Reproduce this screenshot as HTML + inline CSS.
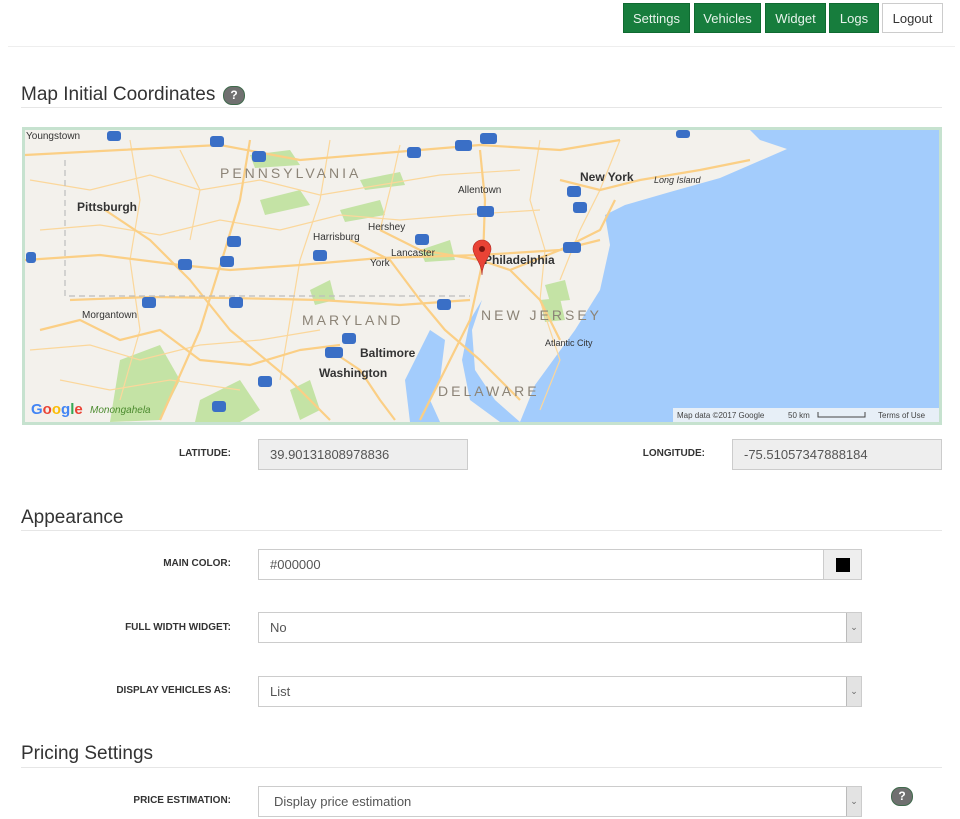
<!DOCTYPE html>
<html><head><meta charset="utf-8"><style>
*{box-sizing:border-box;margin:0;padding:0}
body{width:960px;height:819px;background:#fff;font-family:"Liberation Sans",sans-serif;color:#333;position:relative;overflow:hidden}
.a{position:absolute}
.btn{position:absolute;top:3px;height:30px;background:#177d3d;color:#e8f3ec;font-size:13px;line-height:30px;text-align:center;border:1px solid #0f6a31}
.h{position:absolute;left:21px;font-size:19px;color:#333}
.hr{position:absolute;left:21px;width:921px;height:1px;background:#e6e6e6}
.lbl{position:absolute;font-size:10px;font-weight:bold;color:#333;text-align:right;width:200px}
.inp{position:absolute;height:31px;border:1px solid #ccc;font-size:13px;color:#555;padding-left:11px;line-height:29px;background:#fff}
.sel .ar{position:absolute;right:0;top:0;width:15px;height:29px;background:#e3e3e3;border-left:1px solid #bbb;font-size:9px;color:#666;text-align:center;line-height:29px}
.q{position:absolute;width:22px;height:19px;border-radius:9px;background:#707070;border:1px solid #3f6a4c;color:#fff;font-weight:bold;font-size:12px;text-align:center;line-height:17px}
svg text{font-family:"Liberation Sans",sans-serif}
</style></head><body>
<div class="btn" style="left:623px;width:67px">Settings</div>
<div class="btn" style="left:694px;width:67px">Vehicles</div>
<div class="btn" style="left:765px;width:61px">Widget</div>
<div class="btn" style="left:829px;width:50px">Logs</div>
<div class="btn" style="left:882px;width:61px;background:#fff;color:#333;border-color:#ccc">Logout</div>
<div class="a" style="left:8px;top:46px;width:947px;height:1px;background:#eee"></div>

<div class="h" style="top:84px">Map Initial Coordinates</div>
<div class="q" style="left:223px;top:86px">?</div>
<div class="hr" style="top:107px"></div>

<div class="a" style="left:22px;top:127px;width:920px;height:298px;background:#c6e2cf;padding:3px">
<svg width="914" height="292" viewBox="25 130 914 292" style="display:block">
<rect x="25" y="130" width="914" height="292" fill="#f3f1ec"/>
<g fill="#c4e3a5">
<path d="M120 360 L160 345 L180 380 L160 420 L110 422Z"/><path d="M200 400 L240 380 L260 410 L240 422 L195 422Z"/>
<path d="M260 200 L300 190 L310 205 L265 215Z"/><path d="M340 210 L380 200 L385 215 L345 222Z"/>
<path d="M310 290 L330 280 L335 300 L315 305Z"/><path d="M420 250 L450 240 L455 260 L425 262Z"/>
<path d="M545 285 L565 280 L570 300 L550 302Z"/><path d="M250 155 L290 150 L300 165 L255 168Z"/>
<path d="M540 300 L560 298 L565 320 L545 322Z"/><path d="M360 180 L400 172 L405 185 L365 190Z"/>
<path d="M290 390 L310 380 L320 410 L300 420Z"/>
</g>
<g fill="#a3ccfc">
<path d="M750 130 L939 130 L939 422 L520 422 L535 385 L575 330 L600 290 L610 245 L605 215 L625 205 L670 192 L720 178 L787 149 L760 140 Z"/>
<path d="M482 300 L472 330 L475 370 L495 400 L520 422 L500 422 L470 400 L462 360 L470 320Z"/>
<path d="M430 330 L445 340 L440 380 L430 400 L440 422 L410 422 L405 380 L420 350Z"/>
</g>
<g fill="none" stroke="#fbd79b" stroke-width="1.2">
<path d="M30 180 L90 190 L150 175 L200 190 L260 180 L320 195 L380 185 L440 175 L520 170"/>
<path d="M40 230 L100 225 L160 235 L220 220 L280 230 L340 215 L400 220 L460 215 L540 210"/>
<path d="M30 350 L90 345 L140 360 L200 345 L260 340 L320 330"/>
<path d="M130 140 L140 200 L130 260 L140 330 L120 400"/>
<path d="M330 140 L320 200 L300 260 L290 320 L280 380"/>
<path d="M540 140 L530 200 L545 250 L540 300 L560 360 L540 410"/>
<path d="M620 140 L600 190 L580 230 L560 280"/>
<path d="M180 150 L200 190 L190 240"/><path d="M400 145 L390 190 L380 230"/>
<path d="M60 380 L110 390 L170 380 L240 390"/>
</g>
<g fill="none" stroke="#fbcf85" stroke-width="2.2" stroke-linejoin="round">
<path d="M25 155 L120 150 L220 145 L300 160 L420 150 L480 145 L560 150 L620 140"/>
<path d="M25 260 L100 255 L180 265 L230 270 L300 265 L380 258 L480 255 L560 250 L600 240"/>
<path d="M70 300 L150 297 L230 298 L320 300 L400 305 L470 300"/>
<path d="M105 210 L150 240 L190 280 L230 330 L290 380 L330 420"/>
<path d="M250 140 L240 200 L225 250 L200 330 L160 420"/>
<path d="M350 240 L390 260 L420 300 L445 330 L480 360 L520 400"/>
<path d="M480 150 L485 200 L483 260 L470 320 L440 380 L420 420"/>
<path d="M510 270 L560 250 L600 230 L615 200"/>
<path d="M380 230 L420 250 L480 260 L510 270 L540 300 L560 340"/>
<path d="M330 350 L360 370 L380 400 L395 420"/>
<path d="M40 330 L80 320 L120 340 L160 330 L200 360 L250 365 L300 350 L340 345"/>
<path d="M560 180 L600 190 L640 180 L700 170 L750 160"/>
</g>
<path d="M65 160 L65 296 L470 296" fill="none" stroke="#bdbdbd" stroke-width="1.2" stroke-dasharray="6 4"/>
<g font-size="10" fill="#333">
<text x="26" y="139">Youngstown</text>
<text x="77" y="211" font-size="12" font-weight="bold">Pittsburgh</text>
<text x="82" y="318">Morgantown</text>
<text x="313" y="240">Harrisburg</text><text x="368" y="230">Hershey</text>
<text x="370" y="266">York</text><text x="391" y="256">Lancaster</text>
<text x="458" y="193">Allentown</text>
<text x="580" y="181" font-size="12" font-weight="bold">New York</text>
<text x="654" y="183" font-style="italic" font-size="9">Long Island</text>
<text x="484" y="264" font-size="12" font-weight="bold">Philadelphia</text>
<text x="545" y="346" font-size="9">Atlantic City</text>
<text x="360" y="357" font-size="12" font-weight="bold">Baltimore</text>
<text x="319" y="377" font-size="12" font-weight="bold">Washington</text>
</g>
<g font-size="14" fill="#8c8477" letter-spacing="3">
<text x="220" y="178">PENNSYLVANIA</text>
<text x="302" y="325">MARYLAND</text>
<text x="481" y="320">NEW JERSEY</text>
<text x="438" y="396">DELAWARE</text>
</g>
<g fill="#3a6fc6">
<rect x="107" y="131" width="14" height="10" rx="3"/><rect x="210" y="136" width="14" height="11" rx="3"/>
<rect x="252" y="151" width="14" height="11" rx="3"/><rect x="407" y="147" width="14" height="11" rx="3"/>
<rect x="455" y="140" width="17" height="11" rx="3"/><rect x="480" y="133" width="17" height="11" rx="3"/>
<rect x="227" y="236" width="14" height="11" rx="3"/><rect x="178" y="259" width="14" height="11" rx="3"/>
<rect x="220" y="256" width="14" height="11" rx="3"/><rect x="313" y="250" width="14" height="11" rx="3"/>
<rect x="415" y="234" width="14" height="11" rx="3"/><rect x="477" y="206" width="17" height="11" rx="3"/>
<rect x="567" y="186" width="14" height="11" rx="3"/><rect x="573" y="202" width="14" height="11" rx="3"/>
<rect x="563" y="242" width="18" height="11" rx="3"/><rect x="142" y="297" width="14" height="11" rx="3"/>
<rect x="229" y="297" width="14" height="11" rx="3"/><rect x="437" y="299" width="14" height="11" rx="3"/>
<rect x="342" y="333" width="14" height="11" rx="3"/><rect x="325" y="347" width="18" height="11" rx="3"/>
<rect x="258" y="376" width="14" height="11" rx="3"/><rect x="212" y="401" width="14" height="11" rx="3"/>
<rect x="676" y="130" width="14" height="8" rx="3"/><rect x="26" y="252" width="10" height="11" rx="3"/>
</g>
<path d="M482 240 a9 9 0 0 1 9 9 c0 7 -9 14 -9 26 c0 -12 -9 -19 -9 -26 a9 9 0 0 1 9 -9z" fill="#e94335" stroke="#b3261e" stroke-width=".6"/>
<circle cx="482" cy="249" r="3" fill="#7a1510"/>
<text x="31" y="414" font-size="15" font-weight="bold" fill="#4285f4">G<tspan fill="#ea4335">o</tspan><tspan fill="#fbbc05">o</tspan>g<tspan fill="#34a853">l</tspan><tspan fill="#ea4335">e</tspan></text>
<text x="90" y="413" font-size="10" font-style="italic" fill="#4c8b2f">Monongahela</text>
<rect x="673" y="408" width="266" height="14" fill="#f3f4f6" opacity=".85"/>
<g font-size="8" fill="#444"><text x="677" y="418">Map data ©2017 Google</text><text x="788" y="418">50 km</text><text x="878" y="418">Terms of Use</text></g>
<path d="M818 412 v5 h47 v-5" fill="none" stroke="#444" stroke-width="1"/>
</svg></div>

<div class="lbl" style="left:31px;top:448px">LATITUDE:</div>
<div class="inp" style="left:258px;top:439px;width:210px;background:#eee">39.90131808978836</div>
<div class="lbl" style="left:505px;top:448px">LONGITUDE:</div>
<div class="inp" style="left:732px;top:439px;width:210px;background:#eee">-75.51057347888184</div>

<div class="h" style="top:507px">Appearance</div>
<div class="hr" style="top:530px"></div>
<div class="lbl" style="left:31px;top:558px">MAIN COLOR:</div>
<div class="inp" style="left:258px;top:549px;width:604px">#000000<div class="a" style="right:0;top:0;width:38px;height:29px;background:#eee;border-left:1px solid #ccc"><div class="a" style="left:12px;top:8px;width:14px;height:14px;background:#000"></div></div></div>
<div class="lbl" style="left:31px;top:622px">FULL WIDTH WIDGET:</div>
<div class="inp sel" style="left:258px;top:612px;width:604px">No<div class="ar">&#8964;</div></div>
<div class="lbl" style="left:31px;top:685px">DISPLAY VEHICLES AS:</div>
<div class="inp sel" style="left:258px;top:676px;width:604px">List<div class="ar">&#8964;</div></div>

<div class="h" style="top:743px">Pricing Settings</div>
<div class="hr" style="top:767px"></div>
<div class="lbl" style="left:31px;top:795px">PRICE ESTIMATION:</div>
<div class="inp sel" style="left:258px;top:786px;width:604px;padding-left:15px">Display price estimation<div class="ar">&#8964;</div></div>
<div class="q" style="left:891px;top:787px">?</div>
</body></html>
